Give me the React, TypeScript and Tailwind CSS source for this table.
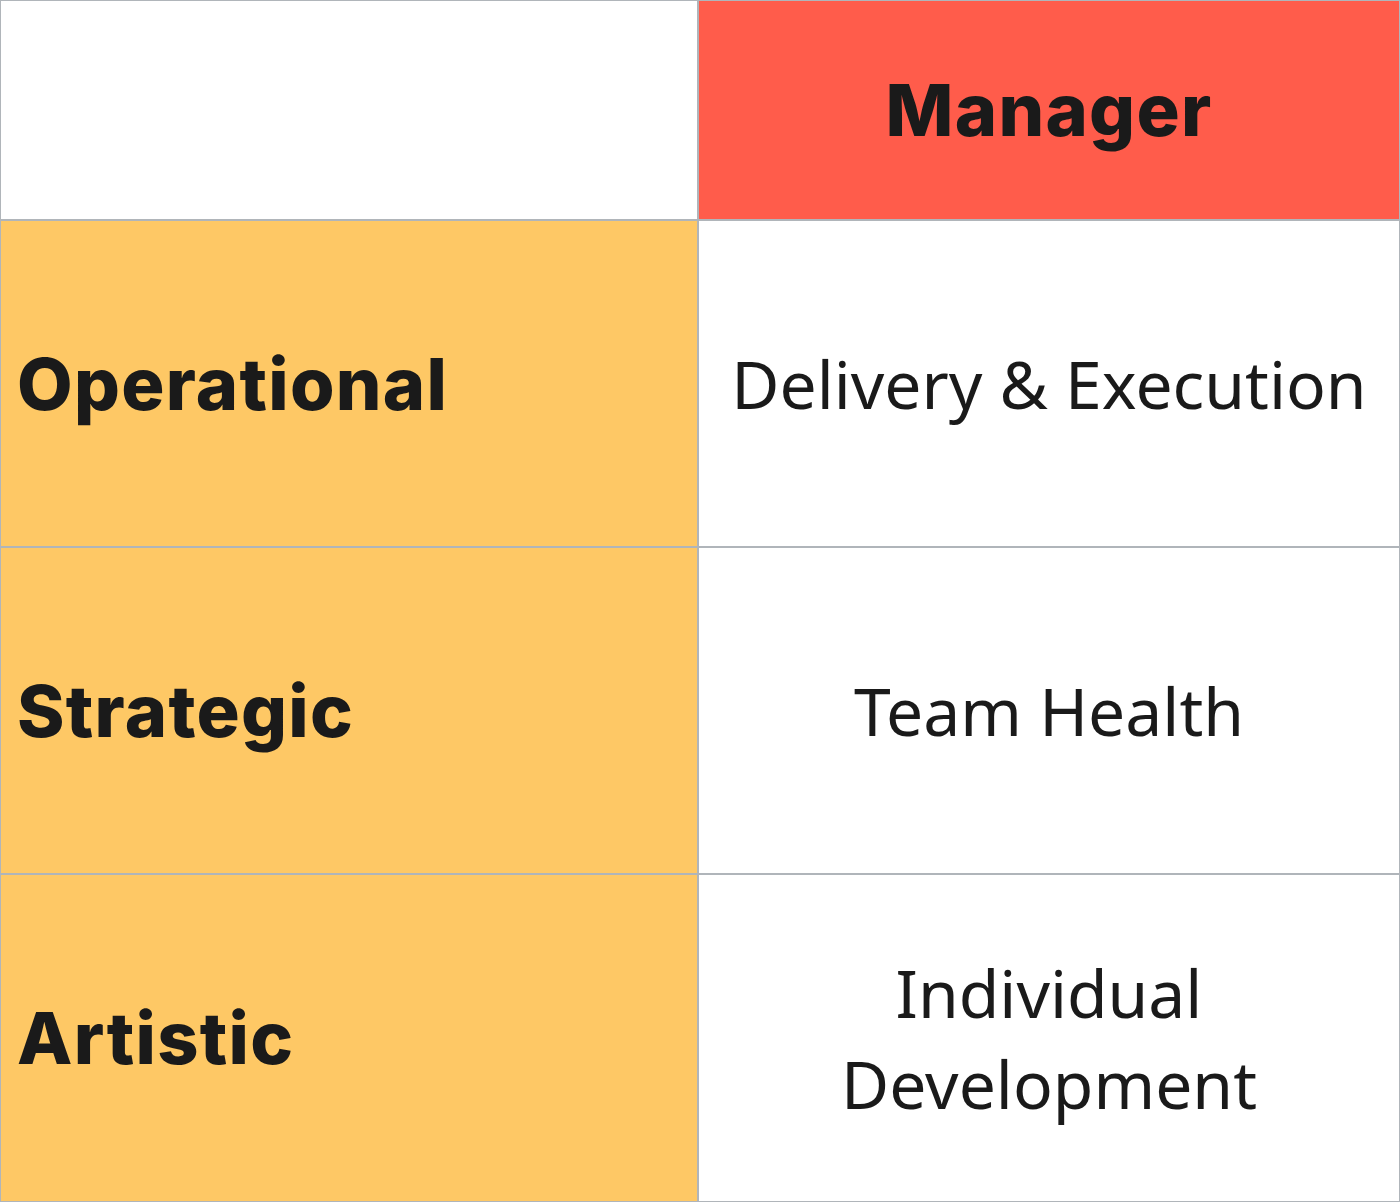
import React from 'react'

const rows = [
    { label: 'Operational', value: ['Delivery & Execution'] },
    { label: 'Strategic', value: ['Team Health'] },
    { label: 'Artistic', value: ['Individual', 'Development'] },
]

const heading = "font-['Inter',_'Liberation_Sans',_sans-serif] font-extrabold text-[#1a1a1a] text-[72px] tracking-[0.018em]"
const body = "font-['Noto_Sans',_'Liberation_Sans',_sans-serif] text-[#1a1a1a] text-[66px] leading-[91px]"

export default function App() {
    return (
        <div className="w-[1400px] h-[1202px] bg-[#b0b5ba] p-px">
            <div className="grid h-full grid-cols-[696px_1fr] grid-rows-[218px_325px_325px_1fr] gap-[2px]">
                {/* header */}
                <div className="bg-white" />
                <div className="bg-[#ff5c4b] flex items-center justify-center">
                    <span className={heading}>Manager</span>
                </div>

                {rows.map((row) => (
                    <React.Fragment key={row.label}>
                        <div className="bg-[#fec865] flex items-center pl-[16px]">
                            <span className={heading}>{row.label}</span>
                        </div>
                        <div className="bg-white flex flex-col items-center justify-center text-center">
                            {row.value.map((line) => (
                                <span key={line} className={body}>{line}</span>
                            ))}
                        </div>
                    </React.Fragment>
                ))}
            </div>
        </div>
    )
}
